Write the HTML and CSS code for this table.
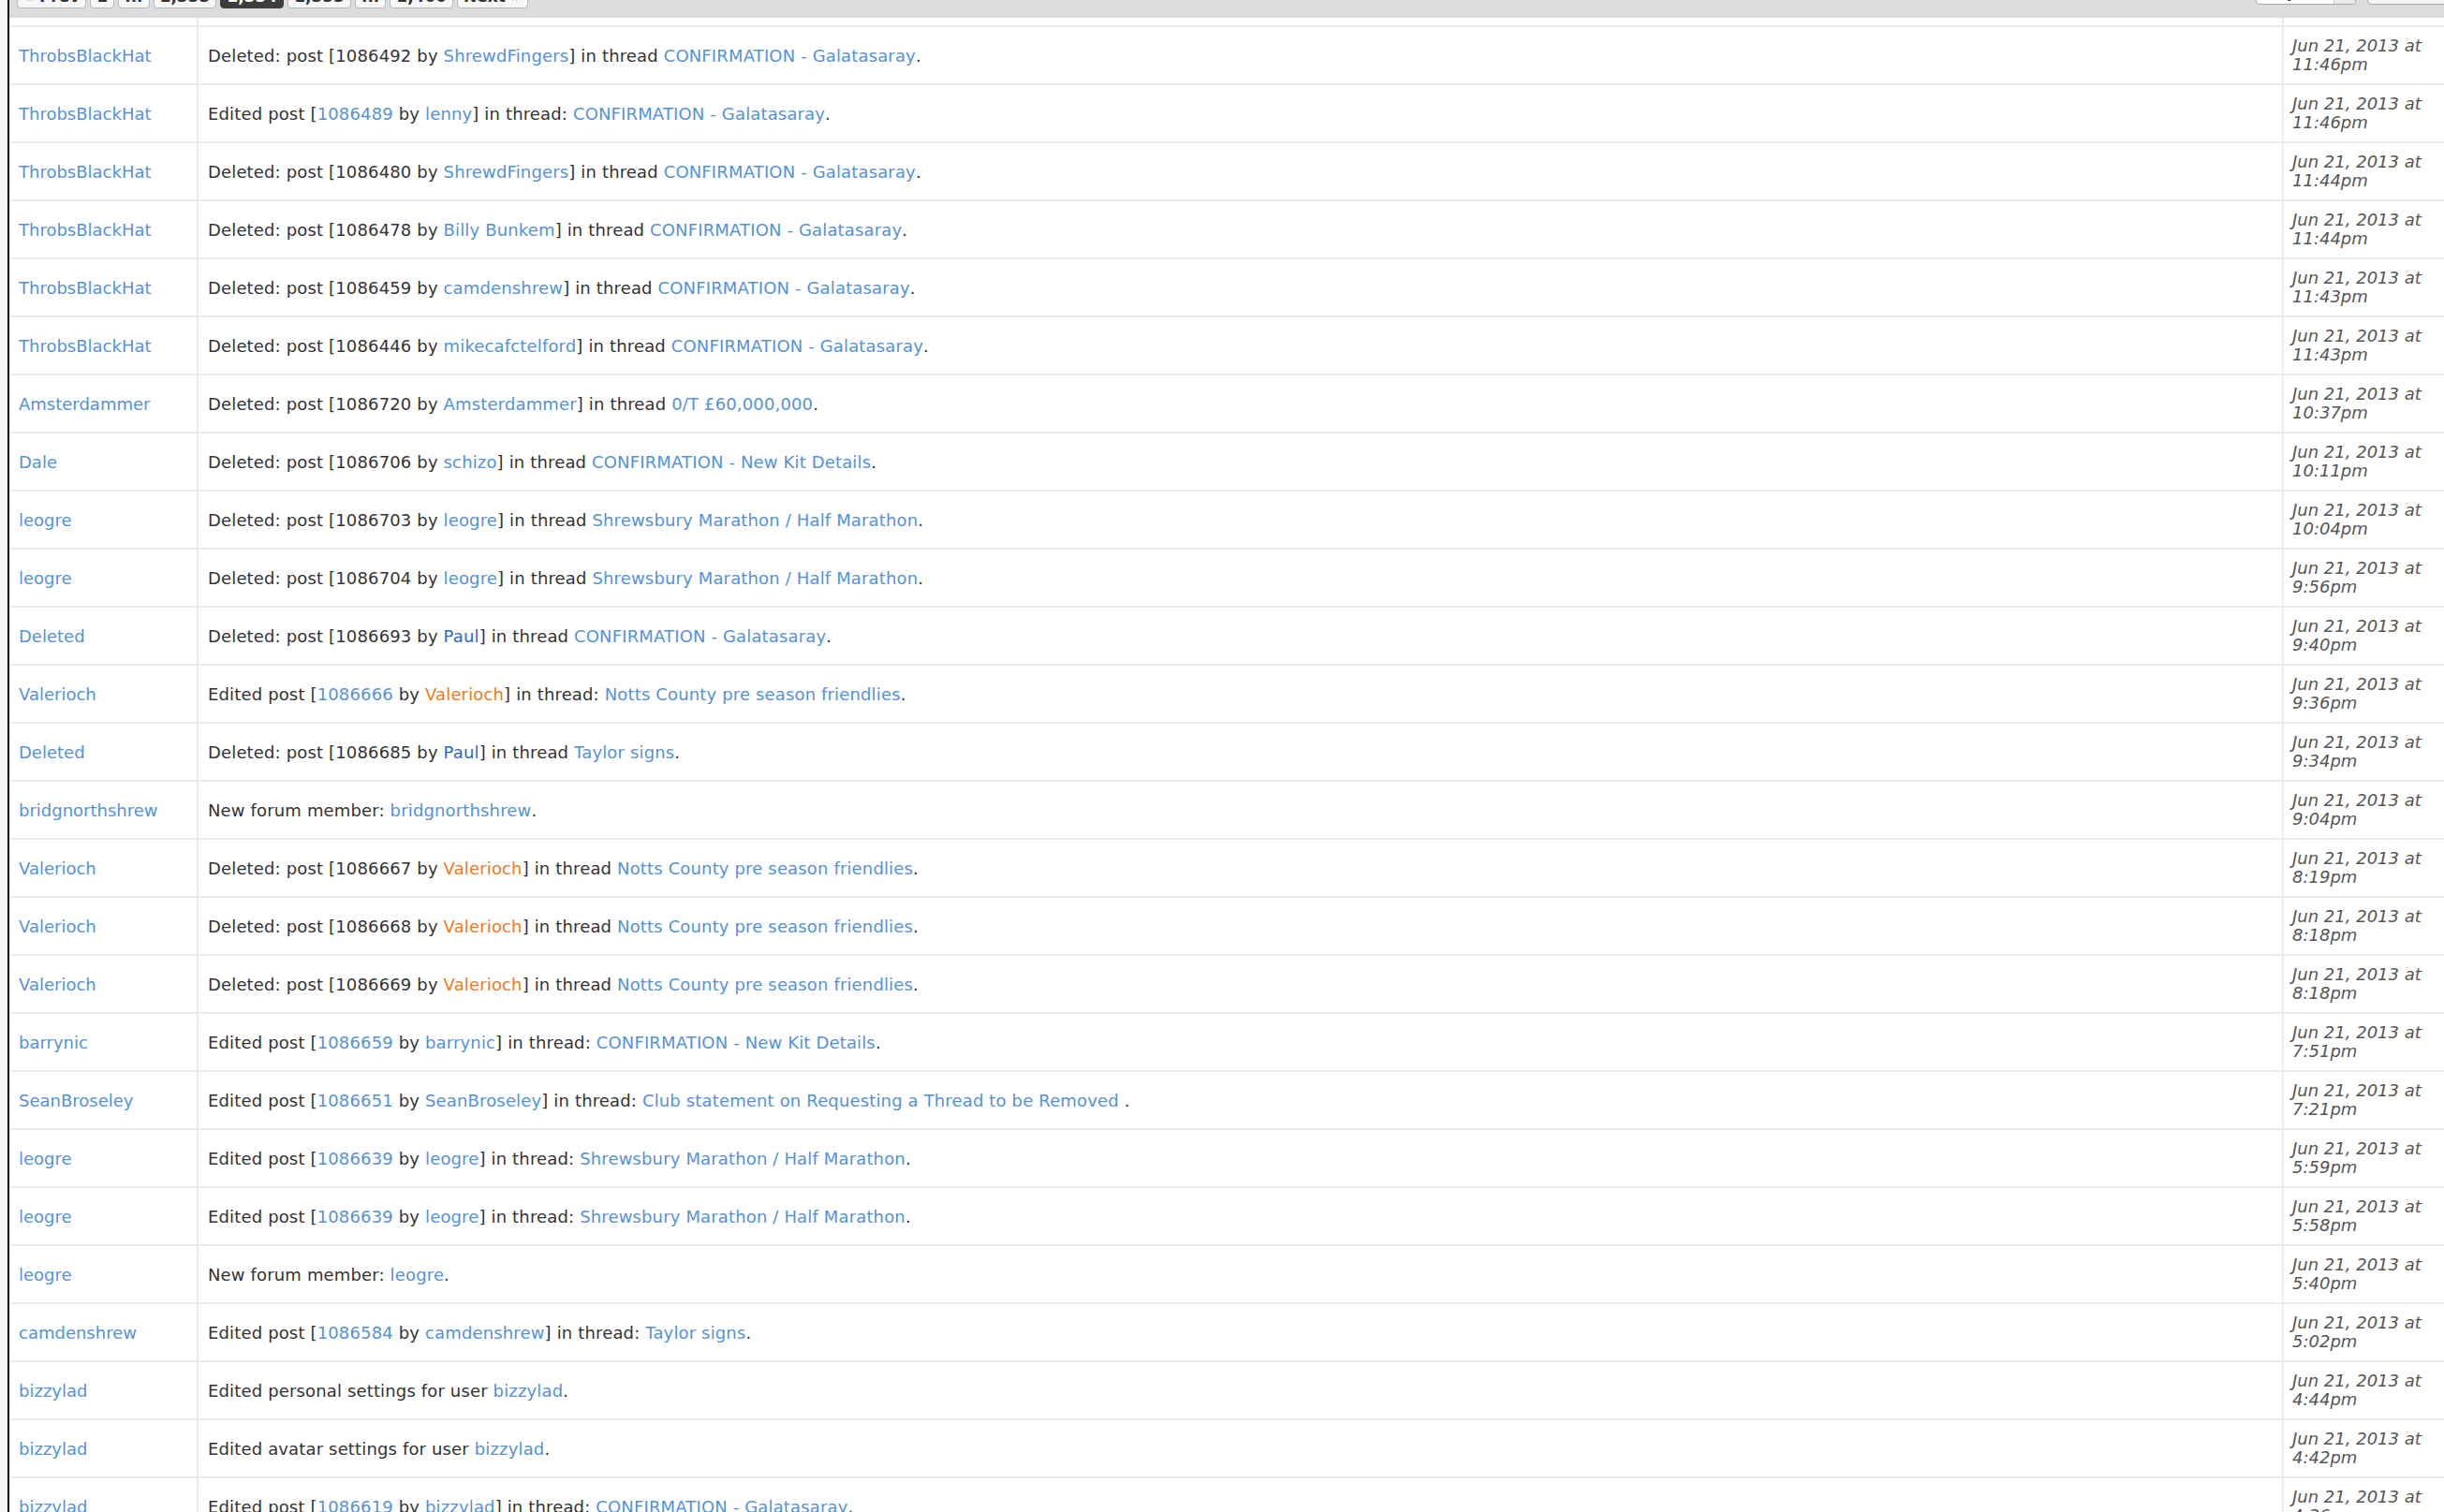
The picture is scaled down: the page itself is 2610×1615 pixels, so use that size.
FILE: index.html
```html
<!DOCTYPE html>
<html>
<head>
<meta charset="utf-8">
<title>Moderator Log</title>
<link rel="stylesheet" href="styles.css">
</head>
<body>
<div class="page">
  <div class="toolbar">
    <div class="pager">
      <span class="pbtn">« Prev</span>
      <span class="pbtn">1</span>
      <span class="pbtn">...</span>
      <span class="pbtn">1,353</span>
      <span class="pbtn current">1,354</span>
      <span class="pbtn">1,355</span>
      <span class="pbtn">...</span>
      <span class="pbtn">1,400</span>
      <span class="pbtn">Next »</span>
    </div>
    <div class="tools">
      <span class="selectbox"><span class="selval">Any</span><span class="selarrow"></span></span>
      <span class="gobtn">Filter</span>
    </div>
  </div>
  <div class="log">
    <div class="row head"><div class="c1"></div><div class="c2"></div><div class="c3"></div></div>

    <div class="row"><div class="c1"><a>ThrobsBlackHat</a></div><div class="c2">Deleted: post [1086492 by <a>ShrewdFingers</a>] in thread <a>CONFIRMATION - Galatasaray</a>.</div><div class="c3">Jun 21, 2013 at 11:46pm</div></div>
    <div class="row"><div class="c1"><a>ThrobsBlackHat</a></div><div class="c2">Edited post [<a>1086489</a> by <a>lenny</a>] in thread: <a>CONFIRMATION - Galatasaray</a>.</div><div class="c3">Jun 21, 2013 at 11:46pm</div></div>
    <div class="row"><div class="c1"><a>ThrobsBlackHat</a></div><div class="c2">Deleted: post [1086480 by <a>ShrewdFingers</a>] in thread <a>CONFIRMATION - Galatasaray</a>.</div><div class="c3">Jun 21, 2013 at 11:44pm</div></div>
    <div class="row"><div class="c1"><a>ThrobsBlackHat</a></div><div class="c2">Deleted: post [1086478 by <a>Billy Bunkem</a>] in thread <a>CONFIRMATION - Galatasaray</a>.</div><div class="c3">Jun 21, 2013 at 11:44pm</div></div>
    <div class="row"><div class="c1"><a>ThrobsBlackHat</a></div><div class="c2">Deleted: post [1086459 by <a>camdenshrew</a>] in thread <a>CONFIRMATION - Galatasaray</a>.</div><div class="c3">Jun 21, 2013 at 11:43pm</div></div>
    <div class="row"><div class="c1"><a>ThrobsBlackHat</a></div><div class="c2">Deleted: post [1086446 by <a>mikecafctelford</a>] in thread <a>CONFIRMATION - Galatasaray</a>.</div><div class="c3">Jun 21, 2013 at 11:43pm</div></div>
    <div class="row"><div class="c1"><a>Amsterdammer</a></div><div class="c2">Deleted: post [1086720 by <a>Amsterdammer</a>] in thread <a>0/T £60,000,000</a>.</div><div class="c3">Jun 21, 2013 at 10:37pm</div></div>
    <div class="row"><div class="c1"><a>Dale</a></div><div class="c2">Deleted: post [1086706 by <a>schizo</a>] in thread <a>CONFIRMATION - New Kit Details</a>.</div><div class="c3">Jun 21, 2013 at 10:11pm</div></div>
    <div class="row"><div class="c1"><a>leogre</a></div><div class="c2">Deleted: post [1086703 by <a>leogre</a>] in thread <a>Shrewsbury Marathon / Half Marathon</a>.</div><div class="c3">Jun 21, 2013 at 10:04pm</div></div>
    <div class="row"><div class="c1"><a>leogre</a></div><div class="c2">Deleted: post [1086704 by <a>leogre</a>] in thread <a>Shrewsbury Marathon / Half Marathon</a>.</div><div class="c3">Jun 21, 2013 at 9:56pm</div></div>
    <div class="row"><div class="c1"><a>Deleted</a></div><div class="c2">Deleted: post [1086693 by <a class="staff">Paul</a>] in thread <a>CONFIRMATION - Galatasaray</a>.</div><div class="c3">Jun 21, 2013 at 9:40pm</div></div>
    <div class="row"><div class="c1"><a>Valerioch</a></div><div class="c2">Edited post [<a>1086666</a> by <a class="orange">Valerioch</a>] in thread: <a>Notts County pre season friendlies</a>.</div><div class="c3">Jun 21, 2013 at 9:36pm</div></div>
    <div class="row"><div class="c1"><a>Deleted</a></div><div class="c2">Deleted: post [1086685 by <a class="staff">Paul</a>] in thread <a>Taylor signs</a>.</div><div class="c3">Jun 21, 2013 at 9:34pm</div></div>
    <div class="row"><div class="c1"><a>bridgnorthshrew</a></div><div class="c2">New forum member: <a>bridgnorthshrew</a>.</div><div class="c3">Jun 21, 2013 at 9:04pm</div></div>
    <div class="row"><div class="c1"><a>Valerioch</a></div><div class="c2">Deleted: post [1086667 by <a class="orange">Valerioch</a>] in thread <a>Notts County pre season friendlies</a>.</div><div class="c3">Jun 21, 2013 at 8:19pm</div></div>
    <div class="row"><div class="c1"><a>Valerioch</a></div><div class="c2">Deleted: post [1086668 by <a class="orange">Valerioch</a>] in thread <a>Notts County pre season friendlies</a>.</div><div class="c3">Jun 21, 2013 at 8:18pm</div></div>
    <div class="row"><div class="c1"><a>Valerioch</a></div><div class="c2">Deleted: post [1086669 by <a class="orange">Valerioch</a>] in thread <a>Notts County pre season friendlies</a>.</div><div class="c3">Jun 21, 2013 at 8:18pm</div></div>
    <div class="row"><div class="c1"><a>barrynic</a></div><div class="c2">Edited post [<a>1086659</a> by <a>barrynic</a>] in thread: <a>CONFIRMATION - New Kit Details</a>.</div><div class="c3">Jun 21, 2013 at 7:51pm</div></div>
    <div class="row"><div class="c1"><a>SeanBroseley</a></div><div class="c2">Edited post [<a>1086651</a> by <a>SeanBroseley</a>] in thread: <a>Club statement on Requesting a Thread to be Removed </a>.</div><div class="c3">Jun 21, 2013 at 7:21pm</div></div>
    <div class="row"><div class="c1"><a>leogre</a></div><div class="c2">Edited post [<a>1086639</a> by <a>leogre</a>] in thread: <a>Shrewsbury Marathon / Half Marathon</a>.</div><div class="c3">Jun 21, 2013 at 5:59pm</div></div>
    <div class="row"><div class="c1"><a>leogre</a></div><div class="c2">Edited post [<a>1086639</a> by <a>leogre</a>] in thread: <a>Shrewsbury Marathon / Half Marathon</a>.</div><div class="c3">Jun 21, 2013 at 5:58pm</div></div>
    <div class="row"><div class="c1"><a>leogre</a></div><div class="c2">New forum member: <a>leogre</a>.</div><div class="c3">Jun 21, 2013 at 5:40pm</div></div>
    <div class="row"><div class="c1"><a>camdenshrew</a></div><div class="c2">Edited post [<a>1086584</a> by <a>camdenshrew</a>] in thread: <a>Taylor signs</a>.</div><div class="c3">Jun 21, 2013 at 5:02pm</div></div>
    <div class="row"><div class="c1"><a>bizzylad</a></div><div class="c2">Edited personal settings for user <a>bizzylad</a>.</div><div class="c3">Jun 21, 2013 at 4:44pm</div></div>
    <div class="row"><div class="c1"><a>bizzylad</a></div><div class="c2">Edited avatar settings for user <a>bizzylad</a>.</div><div class="c3">Jun 21, 2013 at 4:42pm</div></div>
    <div class="row"><div class="c1"><a>bizzylad</a></div><div class="c2">Edited post [<a>1086619</a> by <a>bizzylad</a>] in thread: <a>CONFIRMATION - Galatasaray</a>.</div><div class="c3">Jun 21, 2013 at 4:36pm</div></div>
  </div>
</div>
</body>
</html>
```

FILE: styles.css
```css
html, body {
  margin: 0;
  padding: 0;
  overflow: hidden;
  background: #f5f5f5;
}
body {
  font-family: "DejaVu Sans", Verdana, sans-serif;
  font-size: 18px;
  color: #333333;
}
.page {
  margin-left: 8px;
  border-left: 2px solid #000000;
  background: #ffffff;
  width: 2600px;
}
.toolbar {
  height: 19px;
  background: #dcdcdc;
  display: flex;
  align-items: flex-start;
  overflow: hidden;
}
.pager {
  display: flex;
  gap: 4px;
  margin-left: 8px;
  margin-top: -17px;
}
.pbtn {
  display: block;
  height: 24px;
  line-height: 24px;
  padding: 0 6px;
  border: 1px solid #b9b9b9;
  border-radius: 4px;
  background: #f6f6f6;
  font-weight: bold;
  font-size: 17px;
  color: #333333;
}
.pbtn.current {
  background: #3d3d3d;
  border-color: #3d3d3d;
  color: #ffffff;
}
.tools {
  margin-left: auto;
  display: flex;
  gap: 12px;
  margin-top: -24px;
  margin-right: -40px;
}
.selectbox {
  display: flex;
  width: 105px;
  height: 27px;
  border: 1px solid #a9a9a9;
  border-radius: 4px;
  background: #ffffff;
  overflow: hidden;
}
.selval {
  flex: 1;
  padding-left: 8px;
  line-height: 27px;
}
.selarrow {
  width: 22px;
  border-left: 1px solid #c9c9c9;
  background: #ececec;
}
.gobtn {
  display: block;
  width: 110px;
  height: 27px;
  line-height: 27px;
  border: 1px solid #a9a9a9;
  border-radius: 4px;
  background: #f6f6f6;
  padding-left: 10px;
}
.log {
  display: flex;
  flex-direction: column;
}
.row {
  display: grid;
  grid-template-columns: 200px 2227px 173px;
  height: 62px;
  box-sizing: border-box;
  border-bottom: 2px solid #ebebeb;
}
.row.head {
  height: 10px;
}
.c1, .c2, .c3 {
  display: flex;
  align-items: center;
  box-sizing: border-box;
  min-width: 0;
}
.c1 {
  padding-left: 10px;
}
.c2 {
  border-left: 2px solid #ebebeb;
  padding-left: 10px;
  white-space: pre;
  letter-spacing: 0.15px;
}
.c3 {
  border-left: 2px solid #ebebeb;
  padding-left: 9px;
  padding-right: 4px;
  font-style: italic;
  color: #555555;
  line-height: 20px;
}
a {
  color: #5592d8;
  text-decoration: none;
  cursor: pointer;
}
a.staff {
  color: #2c6ac4;
}
a.orange {
  color: #ef7a22;
}
```
